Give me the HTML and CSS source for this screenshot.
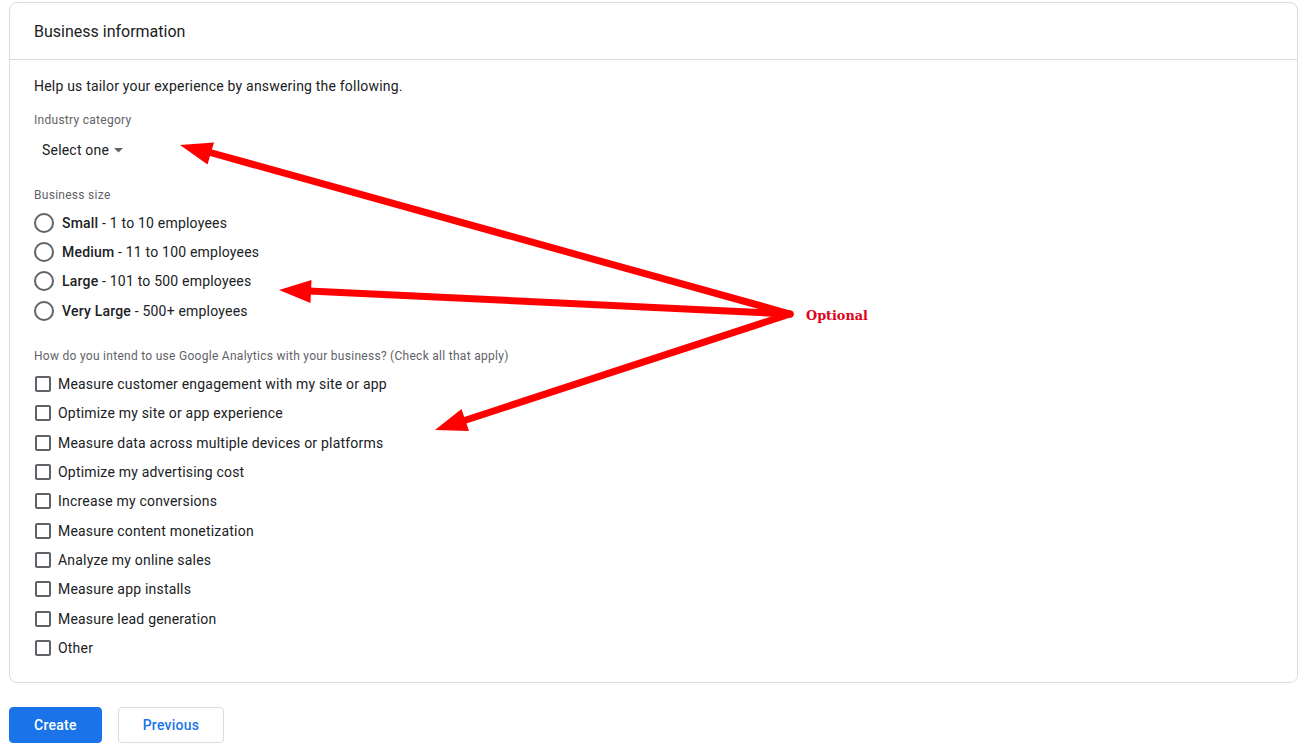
FILE: index.html
```html
<!DOCTYPE html>
<html lang="en">
<head>
<meta charset="utf-8">
<title>Business information</title>
<link rel="stylesheet" href="styles.css">
</head>
<body>
<div class="page">
  <section class="card">
    <header class="card-header">Business information</header>
    <div class="card-body">
      <p class="intro">Help us tailor your experience by answering the following.</p>

      <div class="field-label industry-label">Industry category</div>
      <button class="select" type="button">Select one
        <svg class="caret" viewBox="0 0 10 5" width="9" height="4.5"><path d="M0 0 L10 0 L5 5 Z" fill="#5f6368"/></svg>
      </button>

      <div class="field-label size-label">Business size</div>
      <ul class="options radios">
        <li class="option"><span class="radio"></span><span><b>Small</b> - 1 to 10 employees</span></li>
        <li class="option"><span class="radio"></span><span><b>Medium</b> - 11 to 100 employees</span></li>
        <li class="option"><span class="radio"></span><span><b>Large</b> - 101 to 500 employees</span></li>
        <li class="option"><span class="radio"></span><span><b>Very Large</b> - 500+ employees</span></li>
      </ul>

      <div class="field-label use-label">How do you intend to use Google Analytics with your business? (Check all that apply)</div>
      <ul class="options checks">
        <li class="option"><span class="check"></span><span>Measure customer engagement with my site or app</span></li>
        <li class="option"><span class="check"></span><span>Optimize my site or app experience</span></li>
        <li class="option"><span class="check"></span><span>Measure data across multiple devices or platforms</span></li>
        <li class="option"><span class="check"></span><span>Optimize my advertising cost</span></li>
        <li class="option"><span class="check"></span><span>Increase my conversions</span></li>
        <li class="option"><span class="check"></span><span>Measure content monetization</span></li>
        <li class="option"><span class="check"></span><span>Analyze my online sales</span></li>
        <li class="option"><span class="check"></span><span>Measure app installs</span></li>
        <li class="option"><span class="check"></span><span>Measure lead generation</span></li>
        <li class="option"><span class="check"></span><span>Other</span></li>
      </ul>
    </div>
  </section>

  <div class="actions">
    <button class="btn btn-primary" type="button">Create</button>
    <button class="btn btn-outline" type="button">Previous</button>
  </div>

  <svg class="annotation" viewBox="0 0 1311 750" width="1311" height="750">
    <g stroke="#ff0000" stroke-width="7" stroke-linecap="round" fill="none">
      <line x1="790" y1="314" x2="212" y2="153"/>
      <line x1="790" y1="314" x2="309" y2="291"/>
      <line x1="790" y1="314" x2="463" y2="421"/>
    </g>
    <g fill="#ff0000">
      <polygon points="180,145 214,142.5 207.5,164.5"/>
      <polygon points="279,290 311.5,280 310.5,303"/>
      <polygon points="435,430 461.5,409 469,431"/>
    </g>
    <text x="806" y="320" class="optional">Optional</text>
  </svg>
</div>
</body>
</html>
```
FILE: styles.css
```css
* { box-sizing: border-box; }

html, body {
  margin: 0;
  padding: 0;
  background: #ffffff;
}

body {
  font-family: Roboto, "Liberation Sans", Arial, sans-serif;
  color: #202124;
  font-size: 14px;
  letter-spacing: 0.2px;
}

.page {
  position: relative;
  width: 1311px;
  height: 750px;
  padding: 2px 13px 0 9px;
  overflow: hidden;
}

.card {
  border: 1px solid #dadce0;
  border-radius: 8px;
  background: #fff;
}

.card-header {
  height: 57px;
  display: flex;
  align-items: center;
  padding: 0 24px;
  font-size: 16px;
  letter-spacing: 0;
  color: #202124;
  border-bottom: 1px solid #dadce0;
}

.card-body {
  padding: 16px 24px 19px;
}

.intro {
  margin: 0;
  line-height: 20px;
  font-size: 14px;
}

.field-label {
  font-size: 12px;
  line-height: 16px;
  color: #5f6368;
  letter-spacing: 0.28px;
  margin-top: 15px;
}

.industry-label { margin-top: 16px; }

.select {
  display: inline-flex;
  align-items: center;
  gap: 5px;
  height: 36px;
  margin-top: 4px;
  padding: 0 8px;
  border: none;
  background: transparent;
  font-family: inherit;
  font-size: 14px;
  letter-spacing: 0.2px;
  color: #202124;
}

.caret { display: block; margin-top: 1px; }

.size-label { margin-top: 19px; }
.use-label { margin-top: 23px; }

.options {
  list-style: none;
  margin: 0;
  padding: 0;
}

.radios { margin-top: 5px; }
.checks { margin-top: 5px; }

.option {
  display: flex;
  align-items: center;
  height: 29.33px;
  font-size: 14px;
  color: #202124;
}

.option b { font-weight: 500; }

.radio {
  width: 20px;
  height: 20px;
  border: 2px solid #5f6368;
  border-radius: 50%;
  margin-right: 8px;
  flex: none;
}

.check {
  width: 16px;
  height: 16px;
  border: 2px solid #5f6368;
  border-radius: 2px;
  margin: 0 7px 0 1px;
  flex: none;
}

.actions {
  display: flex;
  gap: 16px;
  margin-top: 24px;
}

.btn {
  height: 36px;
  padding: 0 24px;
  border-radius: 4px;
  font-family: inherit;
  font-size: 14px;
  font-weight: 500;
  letter-spacing: 0.25px;
}

.btn-primary {
  background: #1a73e8;
  color: #fff;
  border: 1px solid #1a73e8;
}

.btn-outline {
  background: #fff;
  color: #1a73e8;
  border: 1px solid #dadce0;
}

.annotation {
  position: absolute;
  left: 0;
  top: 0;
  pointer-events: none;
}

.optional {
  font-family: "DejaVu Serif", "Liberation Serif", serif;
  font-weight: bold;
  font-size: 12.8px;
  letter-spacing: 0;
  fill: #e0001a;
}
```
